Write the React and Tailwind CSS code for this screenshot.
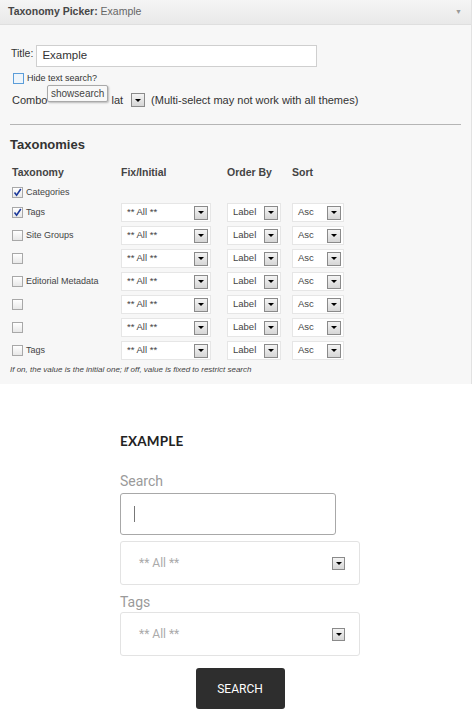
const rows = [
  { name: 'Categories', checked: true, selects: false },
  { name: 'Tags', checked: true, selects: true },
  { name: 'Site Groups', checked: false, selects: true },
  { name: '', checked: false, selects: true },
  { name: 'Editorial Metadata', checked: false, selects: true },
  { name: '', checked: false, selects: true },
  { name: '', checked: false, selects: true },
  { name: 'Tags', checked: false, selects: true },
];

function ArrowBtn({ small }) {
  return (
    <span
      className={`flex items-center justify-center border border-[#8a8a8a] bg-gradient-to-b from-[#f4f4f4] to-[#d6d6d6] ${
        small ? 'w-[13px] h-[13px]' : 'w-[14px] h-[14px]'
      }`}
    >
      <span className="w-0 h-0 border-l-[3px] border-r-[3px] border-t-[3px] border-l-transparent border-r-transparent border-t-black" />
    </span>
  );
}

function MiniSelect({ value, width }) {
  return (
    <div className={`${width} h-[19px] flex items-center justify-between bg-white border border-[#e6e6e6] pl-[5px] pr-[2px] text-[9.5px] text-[#444]`}>
      <span>{value}</span>
      <ArrowBtn />
    </div>
  );
}

function Check({ checked, blue }) {
  return (
    <span
      className={`w-[11px] h-[11px] border flex items-center justify-center ${
        blue ? 'border-[#5b9dd9] bg-[#eef5fb]' : 'border-[#a8a8a8] bg-gradient-to-b from-white to-[#e8e8e8]'
      }`}
    >
      {checked && (
        <svg width="9" height="9" viewBox="0 0 9 9">
          <path d="M1.5 4.5 L3.6 7.2 L7.8 1" fill="none" stroke="#1e3a9a" strokeWidth="1.6" />
        </svg>
      )}
    </span>
  );
}

export default function App() {
  return (
    <div className="w-[474px] h-[728px] bg-white font-['Liberation_Sans',Arial,sans-serif] overflow-hidden">
      {/* widget panel */}
      <div className="w-[472px] bg-[#f7f7f7] border-r border-[#e2e2e2]">
        <div className="h-[25px] flex items-center justify-between px-[8px] bg-gradient-to-b from-[#f5f5f5] to-[#e9e9e9] border-b border-[#dfdfdf] text-[10.5px]">
          <span>
            <span className="font-bold text-[#464646]">Taxonomy Picker:</span>{' '}
            <span className="text-[#666]">Example</span>
          </span>
          <span className="text-[7px] text-[#999] mr-[1px]">▼</span>
        </div>

        <div className="px-[10px] pt-[20px] pb-[8px] text-[#333] text-[11px]">
          <div className="flex items-start gap-[3px]">
            <span className="pt-[1px] pl-[1px] leading-[14px] text-[10.5px]">Title:</span>
            <div className="w-[281px] h-[22px] border border-[#cfcfcf] bg-white flex items-center px-[5px] text-[11.5px]">
              Example
            </div>
          </div>

          <div className="flex items-center gap-[3px] mt-[5px] pl-[3px] text-[9px] leading-[12px]">
            <Check blue />
            <span>Hide text search?</span>
          </div>

          <div className="relative flex items-center mt-[8px] pl-[2px] h-[16px]">
            <span>Combo</span>
            <span className="ml-[64px]">lat</span>
            <span className="ml-[8px]">
              <ArrowBtn />
            </span>
            <span className="ml-[6px]">(Multi-select may not work with all themes)</span>
            <span className="absolute left-[37px] top-[-7px] h-[17px] px-[3px] flex items-center bg-[#f8f8f8] border border-[#a9a9a9] rounded-[2px] shadow-[1px_1px_2px_rgba(0,0,0,0.25)] text-[10px] text-[#444]">
              showsearch
            </span>
          </div>

          <div className="h-px bg-[#b5b5b5] mt-[16px]" />

          <div className="font-bold text-[13px] leading-[16px] text-[#333] mt-[12px]">Taxonomies</div>

          <div className="grid grid-cols-[109px_106px_65px_60px] mt-[12px] text-[10.5px] leading-[14px] font-bold text-[#444] pl-[2px]">
            <span>Taxonomy</span>
            <span>Fix/Initial</span>
            <span>Order By</span>
            <span>Sort</span>
          </div>

          <div className="mt-[5px] flex flex-col">
            {rows.map((r, i) => (
              <div
                key={i}
                className={`grid grid-cols-[109px_106px_65px_60px] items-center pl-[2px] ${
                  r.selects ? 'h-[23px]' : 'h-[17px]'
                }`}
              >
                <div className="flex items-center gap-[3px] text-[9px] text-[#444]">
                  <Check checked={r.checked} />
                  <span>{r.name}</span>
                </div>
                {r.selects ? (
                  <>
                    <MiniSelect value="** All **" width="w-[90px]" />
                    <MiniSelect value="Label" width="w-[54px]" />
                    <MiniSelect value="Asc" width="w-[52px]" />
                  </>
                ) : null}
              </div>
            ))}
          </div>

          <div className="italic text-[8px] leading-[12px] text-[#444] mt-[2px]">
            If on, the value is the initial one; if off, value is fixed to restrict search
          </div>
        </div>
      </div>

      {/* rendered widget */}
      <div className="pl-[120px] pt-[48px]">
        <div className="font-['Lato',sans-serif] font-bold text-[13.5px] leading-[18px] text-[#222] tracking-[0.2px]">EXAMPLE</div>

        <div className="font-['Roboto',sans-serif] text-[14px] leading-[18px] text-[#9a9a9a] mt-[22px]">Search</div>
        <div className="w-[216px] h-[42px] mt-[3px] border border-[#a8a8a8] rounded-[3px] flex items-center pl-[13px]">
          <span className="w-px h-[16px] bg-[#777]" />
        </div>

        <div className="w-[240px] h-[44px] mt-[6px] border border-[#e3e3e3] rounded-[3px] flex items-center justify-between pl-[18px] pr-[14px] font-['Roboto',sans-serif] text-[12px] text-[#aaa]">
          <span>** All **</span>
          <ArrowBtn small />
        </div>

        <div className="font-['Roboto',sans-serif] text-[14px] leading-[18px] text-[#9a9a9a] mt-[8px]">Tags</div>
        <div className="w-[240px] h-[44px] mt-[1px] border border-[#e3e3e3] rounded-[3px] flex items-center justify-between pl-[18px] pr-[14px] font-['Roboto',sans-serif] text-[12px] text-[#aaa]">
          <span>** All **</span>
          <ArrowBtn small />
        </div>

        <div className="w-[240px] flex justify-center mt-[12px]">
          <div className="w-[89px] h-[41px] bg-[#2e2e2e] rounded-[3px] flex items-center justify-center font-['Roboto',sans-serif] text-[12px] text-white">
            SEARCH
          </div>
        </div>
      </div>
    </div>
  );
}
